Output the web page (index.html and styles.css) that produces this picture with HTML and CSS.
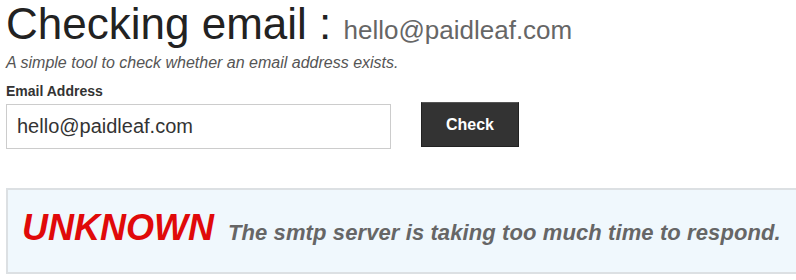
FILE: index.html
```html
<!DOCTYPE html>
<html lang="en">
<head>
  <meta charset="UTF-8" />
  <meta name="viewport" content="width=device-width, initial-scale=1.0"/>
  <title>Email Checker</title>

  <link rel="stylesheet" href="styles.css">
</head>
<body>
  <div class="container">
    <h1>Checking email : <small>hello@paidleaf.com</small></h1>
    <p class="lead">A simple tool to check whether an email address exists.</p>

    <form class="checkForm" onsubmit="return false;">
      <div class="field">
        <label for="email">Email Address</label>
        <input type="text" id="email" value="hello@paidleaf.com">
      </div>
      <button type="submit" class="btnCheck">Check</button>
    </form>

    <div class="result">
      <span class="status">UNKNOWN</span>
      <span class="message">The smtp server is taking too much time to respond.</span>
    </div>
  </div>
</body>
</html>
```

FILE: styles.css
```css
/* Base Styling */
body {
  margin: 0;
  background: #fff;
  color: #333;
  font-family: "Liberation Sans", Arial, sans-serif;
  overflow-x: hidden;
}

.container {
  padding: 0 0 0 6px;
}

h1 {
  margin: 0;
  font-size: 44px;
  font-weight: normal;
  line-height: 48px;
  color: #222;
  white-space: nowrap;
}

h1 small {
  font-size: 26px;
  line-height: 1;
  color: #666;
}

.lead {
  margin: 6px 0 0;
  font-size: 16px;
  line-height: 18px;
  font-style: italic;
  color: #555;
}

/* Form */
.checkForm {
  display: flex;
  align-items: flex-end;
  gap: 30px;
  margin-top: 11px;
}

.field {
  display: flex;
  flex-direction: column;
}

label {
  font-size: 14px;
  font-weight: bold;
  line-height: 16px;
  margin-bottom: 5px;
  color: #333;
}

input {
  box-sizing: border-box;
  width: 385px;
  height: 45px;
  padding: 0 10px;
  border: 1px solid #ccc;
  font-family: inherit;
  font-size: 20px;
  color: #333;
  outline: none;
}

.btnCheck {
  box-sizing: border-box;
  width: 98px;
  height: 45px;
  margin-bottom: 2px;
  background: #333;
  border: 1px solid #222;
  border-top-color: #555;
  color: #fff;
  font-family: inherit;
  font-size: 16px;
  font-weight: bold;
  cursor: pointer;
}

/* Result box */
.result {
  margin: 39px -20px 0 0;
  padding: 18px 14px 24px;
  background: #f0f8fd;
  border: 2px solid #dce0e3;
  font-size: 36px;
  line-height: 40px;
  white-space: nowrap;
}

.status {
  font-weight: bold;
  font-style: italic;
  color: #e00a0a;
}

.message {
  font-size: 22px;
  line-height: 1;
  font-weight: bold;
  font-style: italic;
  letter-spacing: 0.1px;
  color: #666;
  margin-left: 4px;
}
```
